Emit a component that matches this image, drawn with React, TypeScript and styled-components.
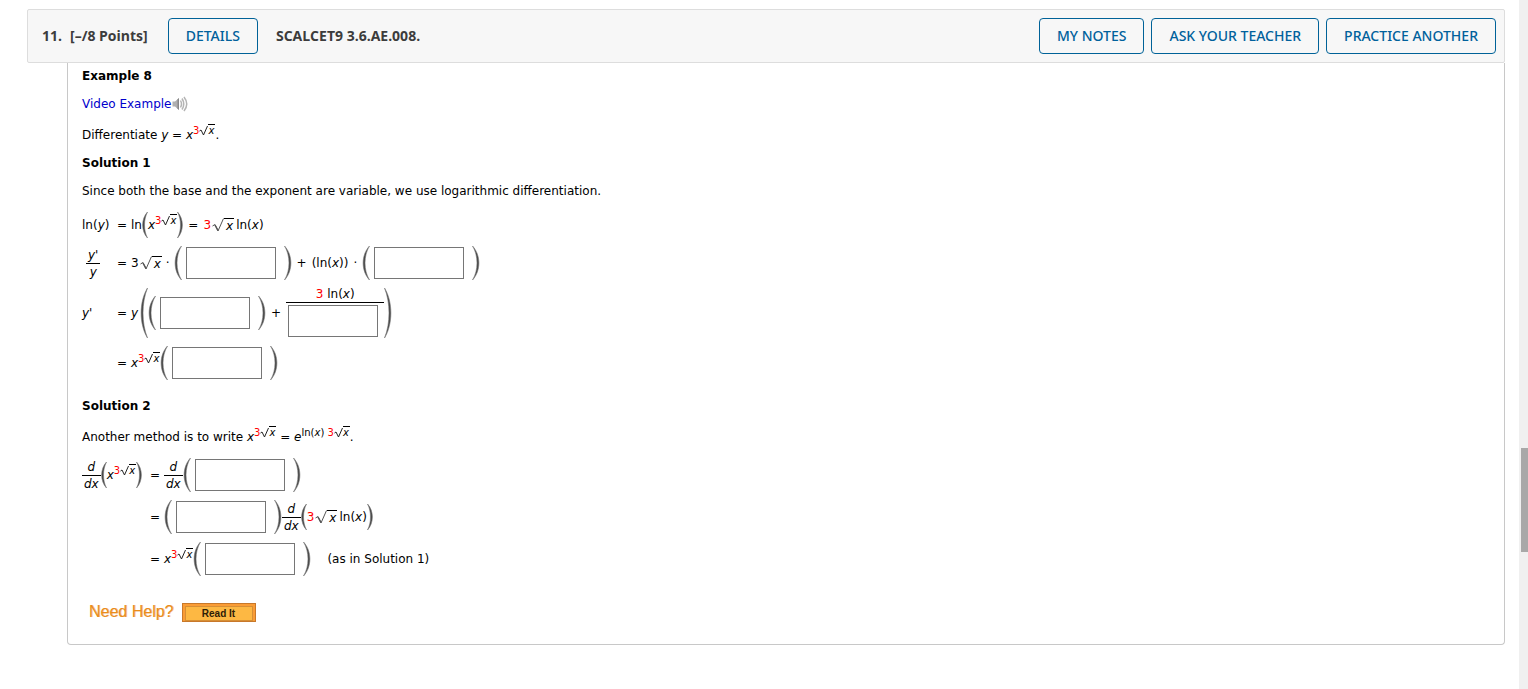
import React from 'react';
import styled, { createGlobalStyle } from 'styled-components';

const GlobalStyle = createGlobalStyle`
  *, *::before, *::after { box-sizing: border-box; }
  body { margin: 0; background: #fff; color: #000; font: 12px/16px 'DejaVu Sans', Verdana, sans-serif; }
`;

const Page = styled.div`
  display: flex;
  min-height: 100vh;
`;
const Main = styled.main`
  flex: 1;
  min-width: 0;
  padding: 9px 14px 40px 27px;
`;
const ScrollTrack = styled.div`
  flex: none;
  display: flex;
  flex-direction: column;
  width: 9px;
  padding-left: 2px;
  background: #f0f0f0;
`;
const ScrollSpace = styled.div<{ $share: number }>`
  flex: ${(p) => p.$share} 0 0;
`;
const ScrollThumb = styled(ScrollSpace)`
  background: #a8a8a8;
`;

const Header = styled.header`
  display: flex;
  align-items: center;
  height: 54px;
  padding: 0 8px 0 14px;
  border: 1px solid #ddd;
  border-radius: 2px;
  background: #f7f7f7;
  color: #3c3c3c;
  font: 700 14px/20px 'Open Sans', 'Noto Sans', sans-serif;
`;
const QuestionNumber = styled.span`
  margin-right: 8px;
`;
const Points = styled.span`
  margin-right: 20px;
`;
const Code = styled.span`
  flex: 1;
  margin-left: 18px;
`;
const OutlineButton = styled.button`
  height: 36px;
  padding: 0 17px;
  border: 1px solid #006298;
  border-radius: 4px;
  background: transparent;
  color: #00619c;
  font: 500 14px/20px 'Noto Sans', 'Open Sans', sans-serif;
`;
const Actions = styled.div`
  display: flex;
  gap: 7px;
`;

const Body = styled.section`
  margin-left: 40px;
  padding: 5px 14px 22px;
  border: 1px solid #c8c8c8;
  border-top: 0;
  border-radius: 0 0 4px 4px;
`;
const Heading = styled.h3`
  margin: 0 0 12px;
  font-size: 12px;
  line-height: 16px;
`;
const Para = styled.p`
  display: flex;
  align-items: center;
  margin: 0 0 12px;
  white-space: pre;
`;
const MathPara = styled(Para)`
  height: 19px;
  padding-top: 3px;
`;
const VideoLink = styled.a`
  color: #0000cc;
  text-decoration: none;
`;
const Steps = styled.div<{ $lhs: number }>`
  display: grid;
  grid-template-columns: ${(p) => p.$lhs}px 14px auto;
  row-gap: 6px;
  align-items: center;
  justify-content: start;
  margin: 12px 0 17px;
`;
const Line = styled.div<{ $h?: number }>`
  display: flex;
  align-items: center;
  height: ${(p) => p.$h ?? 36}px;
  white-space: pre;
`;
const Red = styled.span`
  color: #f00;
`;
const Sup = styled.span`
  display: inline-flex;
  align-items: center;
  margin-bottom: 9px;
  font-size: 10px;
  line-height: 12px;
`;
const RootBox = styled.span`
  display: inline-flex;
  align-items: center;
`;
const Radicand = styled.i<{ $small?: boolean }>`
  padding: 0 1px 0 ${(p) => (p.$small ? 0 : 2)}px;
  border-top: 1px solid #000;
  line-height: ${(p) => (p.$small ? 12 : 14)}px;
`;
const Frac = styled.span`
  display: inline-flex;
  flex-direction: column;
  align-items: center;

  & > :first-child {
    align-self: stretch;
    border-bottom: 1px solid #000;
    text-align: center;
  }
  & > i {
    padding: 0 2px;
  }
`;
const InputFrac = styled(Frac)`
  margin-bottom: 3px;
`;
const Blank = styled.input<{ $tight?: boolean }>`
  width: 90px;
  height: 32px;
  margin: ${(p) => (p.$tight ? '2px 6px 0 2px' : '0 8px 0 4px')};
  padding: 0 6px;
  border: 1px solid #767676;
  border-radius: 0;
  background: #fff;
  font: inherit;
`;
const ParenSvg = styled.svg`
  flex: none;
  display: block;
`;
const Op = styled.span<{ $l?: number; $r?: number }>`
  margin: 0 ${(p) => p.$r ?? 5}px 0 ${(p) => p.$l ?? 5}px;
`;
const Note = styled.span`
  margin-left: 16px;
`;
const Help = styled.div`
  display: flex;
  align-items: center;
  gap: 8px;
  margin: 25px 0 0 7px;
`;
const HelpLabel = styled.span`
  color: #ea8c1c;
  font: 16px/20px 'Liberation Sans', Arial, sans-serif;
  text-shadow: 1px 0 0 rgba(234, 140, 28, 0.5);
`;
const ReadButton = styled.button`
  width: 74px;
  height: 19px;
  padding: 2px;
  border: 1px solid #c8782a;
  background: #fa9c35;
`;
const ReadFace = styled.span`
  display: block;
  border: 1px solid #d68f35;
  background: #fdb843;
  color: #2e2008;
  font: 700 10px/13px 'Liberation Sans', Arial, sans-serif;
`;

function Paren({ right, h = 36, w = 8 }: { right?: boolean; h?: number; w?: number }) {
  const a = right ? 0.5 : w - 0.5;
  const out = right ? w + 1 : -1;
  const inner = right ? w - 1.5 : 1.5;
  return (
    <ParenSvg width={w} height={h} aria-hidden="true">
      <path
        d={`M${a} 1C${out} ${h * 0.28} ${out} ${h * 0.72} ${a} ${h - 1}C${inner} ${h * 0.7} ${inner} ${h * 0.3} ${a} 1Z`}
        fill="#444"
        stroke="#777"
        strokeWidth="0.6"
      />
    </ParenSvg>
  );
}

function Root({ small }: { small?: boolean }) {
  return (
    <RootBox>
      {small ? (
        <svg width="9" height="11" aria-hidden="true">
          <path d="M0.5 6L2 5L4.5 10L8.5 1" fill="none" stroke="#222" />
        </svg>
      ) : (
        <svg width="13" height="14" aria-hidden="true">
          <path d="M1.5 8L4 6.5L7 13L12.5 0.5" fill="none" stroke="#555" />
          <path d="M4 7L7 12.5" stroke="#555" strokeWidth="1.5" />
        </svg>
      )}
      <Radicand $small={small}>x</Radicand>
    </RootBox>
  );
}

const Power = () => (
  <>
    <i>x</i>
    <Sup>
      <Red>3</Red>
      <Root small />
    </Sup>
  </>
);

const LnX = () => (
  <span>
    ln(<i>x</i>)
  </span>
);

const DDx = () => (
  <Frac>
    <i>d</i>
    <i>dx</i>
  </Frac>
);

function Answer({ label }: { label: string }) {
  return (
    <>
      <Paren />
      <Blank type="text" aria-label={label} />
      <Paren right />
    </>
  );
}

const Speaker = () => (
  <svg width="17" height="16" viewBox="0 0 17 16" aria-hidden="true">
    <path d="M0.500 5.500H3L7 2V14L3 10.500H0.500Z" fill="#b0b0b0" />
    <path d="M5.500 3.500L7 2V14L5.500 12.500Z" fill="#888" />
    <path
      d="M8.500 4.500Q10.500 8 8.500 11.500M10 2.500Q13.500 8 10 13.500M12 1Q17.500 8 12 15"
      fill="none"
      stroke="#b4b4b4"
      strokeWidth="1.5"
    />
  </svg>
);

export default function App() {
  return (
    <Page>
      <GlobalStyle />
      <Main>
        <Header>
          <QuestionNumber>11.</QuestionNumber>
          <Points>[–/8 Points]</Points>
          <OutlineButton type="button">DETAILS</OutlineButton>
          <Code>SCALCET9 3.6.AE.008.</Code>
          <Actions>
            <OutlineButton type="button">MY NOTES</OutlineButton>
            <OutlineButton type="button">ASK YOUR TEACHER</OutlineButton>
            <OutlineButton type="button">PRACTICE ANOTHER</OutlineButton>
          </Actions>
        </Header>
        <Body>
          <Heading>Example 8</Heading>
          <Para>
            <VideoLink href="#video">Video Example</VideoLink>
            <Speaker />
          </Para>
          <MathPara>
            Differentiate <i>y</i> = <Power />.
          </MathPara>
          <Heading>Solution 1</Heading>
          <Para>Since both the base and the exponent are variable, we use logarithmic differentiation.</Para>
          <Steps $lhs={35}>
            <span>
              ln(<i>y</i>)
            </span>
            <span>=</span>
            <Line $h={28}>
              ln
              <Paren h={28} w={6} />
              <Power />
              <Paren right h={28} w={6} />
              <Op>=</Op>
              <Red>3</Red>
              <Root />
              <Op $l={2} $r={0}>
                <LnX />
              </Op>
            </Line>

            <Line>
              <Op $l={4}>
                <Frac>
                  <i>y'</i>
                  <i>y</i>
                </Frac>
              </Op>
            </Line>
            <span>=</span>
            <Line>
              <span>3</span>
              <Root />
              <Op $l={4} $r={4}>·</Op>
              <Answer label="First factor" />
              <Op>+</Op>
              (<LnX />)
              <Op>·</Op>
              <Answer label="Second factor" />
            </Line>

            <i>y'</i>
            <span>=</span>
            <Line $h={52}>
              <Op $l={0} $r={2}>
                <i>y</i>
              </Op>
              <Paren h={52} />
              <Answer label="First term" />
              <Op>+</Op>
              <InputFrac>
                <span>
                  <Red>3</Red> <LnX />
                </span>
                <Blank type="text" aria-label="Denominator" $tight />
              </InputFrac>
              <Paren right h={52} />
            </Line>

            <span />
            <span>=</span>
            <Line>
              <Power />
              <Answer label="Derivative" />
            </Line>
          </Steps>

          <Heading>Solution 2</Heading>
          <MathPara>
            Another method is to write <Power /> = <i>e</i>
            <Sup>
              <span>
                <LnX />{' '}
              </span>
              <Red>3</Red>
              <Root small />
            </Sup>
            .
          </MathPara>
          <Steps $lhs={68}>
            <Line>
              <DDx />
              <Paren h={28} w={6} />
              <Power />
              <Paren right h={28} w={6} />
            </Line>
            <span>=</span>
            <Line>
              <DDx />
              <Answer label="Function to differentiate" />
            </Line>

            <span />
            <span>=</span>
            <Line>
              <Answer label="Outer derivative" />
              <DDx />
              <Paren h={28} w={6} />
              <Red>3</Red>
              <Root />
              <Op $l={2} $r={0}>
                <LnX />
              </Op>
              <Paren right h={28} w={6} />
            </Line>

            <span />
            <span>=</span>
            <Line>
              <Power />
              <Answer label="Final derivative" />
              <Note>(as in Solution 1)</Note>
            </Line>
          </Steps>

          <Help>
            <HelpLabel>Need Help?</HelpLabel>
            <ReadButton type="button">
              <ReadFace>Read It</ReadFace>
            </ReadButton>
          </Help>
        </Body>
      </Main>
      <ScrollTrack aria-hidden="true">
        <ScrollSpace $share={448} />
        <ScrollThumb $share={104} />
        <ScrollSpace $share={137} />
      </ScrollTrack>
    </Page>
  );
}
